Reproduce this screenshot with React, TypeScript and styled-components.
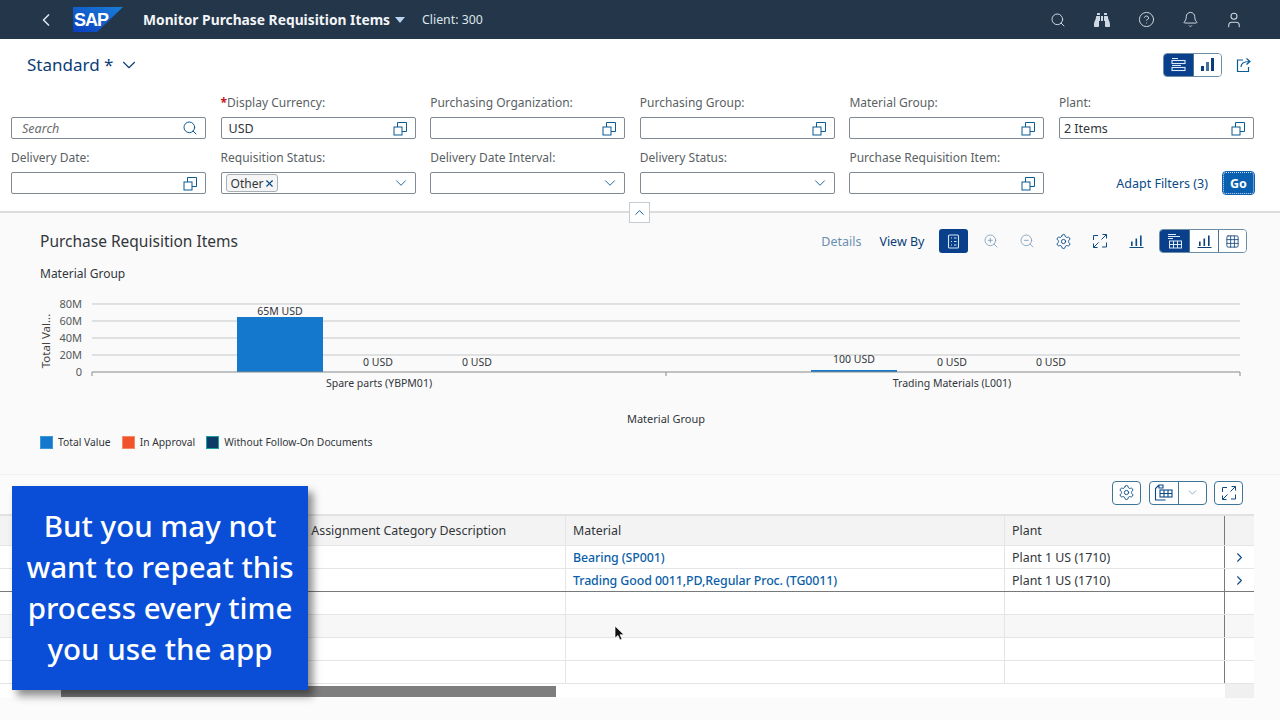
import styled, { createGlobalStyle } from "styled-components";
import {
  Bell,
  ChevronDown,
  ChevronLeft,
  ChevronRight,
  ChevronUp,
  CircleHelp,
  Grid3x3,
  Search,
  Settings,
  User,
  X,
  ZoomIn,
  ZoomOut,
} from "lucide-react";
import { FaBinoculars } from "react-icons/fa";

const GlobalStyle = createGlobalStyle`
  html, body {
    margin: 0;
    padding: 0;
    background: #fafafa;
    font-family: "Noto Sans", "Liberation Sans", sans-serif;
    color: #32363a;
  }
  * { box-sizing: border-box; }
`;

const Page = styled.div`
  position: relative;
  width: 1280px;
  height: 720px;
  overflow: hidden;
`;

/* shell bar */
const Shell = styled.header`
  display: flex;
  align-items: center;
  height: 39px;
  padding: 0 24px 0 36px;
  background: #23364a;
  color: #fff;
`;

const BackButton = styled.span`
  display: flex;
  width: 37px;
  color: #d8e2ec;
`;

const AppTitle = styled.span`
  margin-left: 20px;
  font-size: 13.8px;
  font-weight: 700;
  color: #f2f5f8;
`;

const TitleCaret = styled.span`
  width: 0;
  height: 0;
  margin: 1px 0 0 5px;
  border-left: 5px solid transparent;
  border-right: 5px solid transparent;
  border-top: 6px solid #b8d4ee;
`;

const Client = styled.span`
  margin-left: 17px;
  font-size: 12.3px;
  color: #dfe5eb;
`;

const ShellActions = styled.div`
  display: flex;
  align-items: center;
  margin-left: auto;
  color: #cfd9e3;
`;

const ShellIcon = styled.span`
  display: flex;
  justify-content: center;
  width: 44px;
`;

/* filter header */
const FilterHeader = styled.section`
  position: relative;
  height: 174px;
  background: #fff;
  border-bottom: 2px solid #dcdcdc;
`;

const VariantRow = styled.div`
  display: flex;
  align-items: center;
  height: 51px;
  padding: 0 28px 0 27px;
`;

const VariantName = styled.span`
  font-size: 17px;
  color: #0a3d77;
`;

const VariantCaret = styled.span`
  display: flex;
  margin-left: 5px;
  color: #0a3d77;
`;

const HeaderTools = styled.div`
  display: flex;
  align-items: center;
  gap: 14px;
  margin-left: auto;
  color: #0a5a94;
`;

const Segmented = styled.div<{ $inset?: boolean }>`
  display: flex;
  height: 24px;
  margin-left: ${(p) => (p.$inset ? 4 : 0)}px;
  border: 1px solid #6c8da8;
  border-radius: 4px;
  overflow: hidden;
`;

const Segment = styled.span<{ $active?: boolean; $width: number }>`
  display: flex;
  align-items: center;
  justify-content: center;
  width: ${(p) => p.$width}px;
  background: ${(p) => (p.$active ? "#0a3f8c" : "#fff")};
  color: ${(p) => (p.$active ? "#dcebf8" : "#0a3f78")};
  & + & {
    border-left: 1px solid #4b7595;
  }
`;

const FilterGrid = styled.div`
  display: grid;
  grid-template-columns: repeat(6, 195px);
  column-gap: 14.6px;
  row-gap: 0;
  padding: 3px 0 0 11px;
`;

const Field = styled.div`
  display: flex;
  flex-direction: column;
  height: 55px;
`;

const FieldLabel = styled.label`
  height: 24px;
  padding-top: 1px;
  font-size: 12px;
  line-height: 18px;
  color: #5a5f64;
`;

const Required = styled.span`
  color: #c4131f;
  font-weight: 700;
`;

const FieldInput = styled.div`
  display: flex;
  align-items: center;
  justify-content: space-between;
  height: 22px;
  padding: 0 7px;
  background: #fff;
  border: 1px solid #7f8a94;
  border-radius: 2px;
  font-size: 12.5px;
  color: #32363a;
`;

const FieldValue = styled.span<{ $tight?: boolean }>`
  margin-left: ${(p) => (p.$tight ? -3 : 0)}px;
`;

const Placeholder = styled.span`
  padding-left: 3px;
  font-style: italic;
  color: #6a6d70;
`;

const InputIcon = styled.span<{ $chevron?: boolean }>`
  display: flex;
  margin-right: ${(p) => (p.$chevron ? -2 : 0)}px;
  color: #0a5a94;
`;

const Token = styled.span`
  display: flex;
  align-items: center;
  gap: 1px;
  height: 18px;
  margin-left: -3px;
  padding: 0 2px 0 4px;
  background: #f5f5f5;
  border: 1px solid #a9b1b8;
  border-radius: 3px;
  font-size: 12px;
  color: #32363a;
  svg {
    color: #0a4a86;
  }
`;

const FilterActions = styled.div`
  display: flex;
  align-items: flex-end;
  justify-content: flex-end;
  gap: 15px;
  height: 46px;
`;

const AdaptLink = styled.span`
  padding-bottom: 2px;
  font-size: 12.5px;
  color: #0a4a86;
`;

const GoButton = styled.span`
  display: flex;
  align-items: center;
  justify-content: center;
  width: 31px;
  height: 22px;
  background: #0a5fb0;
  border: 1px dotted #cfe4f7;
  outline: 1px solid #0a5fb0;
  border-radius: 3px;
  font-size: 12.5px;
  font-weight: 700;
  color: #fff;
`;

const CollapseButton = styled.span`
  position: absolute;
  left: 629px;
  bottom: -12px;
  display: flex;
  align-items: center;
  justify-content: center;
  width: 21px;
  height: 21px;
  background: #fff;
  border: 1px solid #c4ccd3;
  color: #0a5a94;
`;

/* chart */
const ChartPanel = styled.section`
  height: 261px;
  padding: 12px 33px 0 40px;
  background: #fafafa;
`;

const ChartHeader = styled.div`
  display: flex;
  align-items: center;
  height: 32px;
`;

const PanelTitle = styled.h2`
  margin: 0;
  font-size: 15.5px;
  font-weight: 400;
  color: #32363a;
`;

const ChartTools = styled.div`
  display: flex;
  align-items: center;
  margin-left: auto;
  color: #0a5a94;
`;

const ToolText = styled.span<{ $muted?: boolean }>`
  margin-right: ${(p) => (p.$muted ? 18 : 14)}px;
  font-size: 12.5px;
  color: ${(p) => (p.$muted ? "#6b8fb0" : "#0a3d77")};
`;

const ToolIcon = styled.span<{ $muted?: boolean }>`
  display: flex;
  justify-content: center;
  width: 36.5px;
  color: ${(p) => (p.$muted ? "#7fa0bb" : "#0a4a86")};
`;

const ActiveTool = styled.span`
  display: flex;
  align-items: center;
  justify-content: center;
  width: 29px;
  height: 24px;
  margin-right: 5px;
  background: #0a3f8c;
  border-radius: 3px;
  color: #d5e5f4;
`;

const GroupLabel = styled.div`
  margin-top: 6px;
  height: 22px;
  font-size: 12px;
  line-height: 22px;
`;

const ChartArea = styled.svg`
  display: block;
  margin: 10px 0 0 -40px;
  font-family: "Noto Sans", "Liberation Sans", sans-serif;
  font-size: 10.5px;
  fill: #32363a;
`;

const Legend = styled.div`
  display: flex;
  align-items: center;
  height: 22px;
  margin-top: 3px;
  font-size: 10.3px;
  color: #32363a;
`;

const LegendItem = styled.span`
  display: flex;
  align-items: center;
  gap: 5px;
  margin-right: 11px;
`;

const Swatch = styled.span<{ $color: string; $edge: string }>`
  width: 13px;
  height: 13px;
  background: ${(p) => p.$color};
  border: 1px solid ${(p) => p.$edge};
`;

/* table */
const TablePanel = styled.section`
  height: 246px;
  padding-top: 1px;
  background: #fbfbfb;
  border-top: 1px solid #f2f2f2;
`;

const TableToolbar = styled.div`
  display: flex;
  align-items: center;
  justify-content: flex-end;
  gap: 7.5px;
  height: 38px;
  padding: 0 37px 5px 0;
  color: #0a4a86;
`;

const ToolButton = styled.span`
  display: flex;
  align-items: center;
  height: 24px;
  background: #fff;
  border: 1px solid #3f7596;
  border-radius: 4px;
`;

const ToolCell = styled.span<{ $width: number }>`
  display: flex;
  align-items: center;
  justify-content: center;
  width: ${(p) => p.$width}px;
  height: 100%;
  & + & {
    border-left: 1px solid #3f7596;
  }
`;

const Table = styled.div`
  width: 1254px;
  border-top: 2px solid #e2e2e2;
`;

const Row = styled.div<{ $kind?: "head" | "shade" | "last" }>`
  display: grid;
  grid-template-columns: 254px 312px 439px 220px 29px;
  height: ${(p) => (p.$kind === "head" ? 30 : 23)}px;
  background: ${(p) =>
    p.$kind === "head" ? "#f3f3f3" : p.$kind === "shade" ? "#f7f7f7" : "#fff"};
  border-bottom: 1px solid ${(p) => (p.$kind === "last" ? "#77797b" : "#e5e5e5")};
`;

const Cell = styled.div<{ $link?: boolean; $nav?: boolean }>`
  display: flex;
  align-items: center;
  justify-content: ${(p) => (p.$nav ? "center" : "flex-start")};
  padding: 0 ${(p) => (p.$nav ? 0 : 7)}px;
  font-size: 12.4px;
  font-weight: ${(p) => (p.$link ? 500 : 400)};
  letter-spacing: ${(p) => (p.$link ? "-0.1px" : "normal")};
  white-space: nowrap;
  overflow: hidden;
  color: ${(p) => (p.$link ? "#0b5fa8" : "#32363a")};
  border-right: 1px solid #e5e5e5;
  &:nth-child(4) {
    border-right-color: #77797b;
  }
  &:last-child {
    border-right: 0;
    color: #0a4a86;
  }
`;

const ScrollTrack = styled.div`
  display: flex;
  width: 1254px;
  height: 14px;
  padding-left: 61px;
  background: #fff;
`;

const ScrollThumb = styled.div`
  width: 495px;
  height: 11px;
  margin-top: 2px;
  background: #7e7e7e;
`;

const ScrollCorner = styled.div`
  width: 29px;
  margin-left: auto;
  background: #f0f0f0;
`;

/* things lying over the page */
const Callout = styled.aside`
  position: absolute;
  left: 12px;
  top: 486px;
  display: flex;
  align-items: center;
  justify-content: center;
  width: 296px;
  height: 204px;
  padding-bottom: 2px;
  background: #0a4ed8;
  box-shadow: 5px 6px 8px rgba(0, 0, 0, 0.45);
  font-size: 29.5px;
  font-weight: 500;
  line-height: 41px;
  text-align: center;
  color: #fff;
`;

const Pointer = styled.svg`
  position: absolute;
  left: 614px;
  top: 625px;
`;

function ValueHelp() {
  return (
    <svg width="15" height="15" viewBox="0 0 15 15" fill="none" stroke="currentColor" strokeWidth="1">
      <rect x="1" y="6" width="8" height="8" />
      <path d="M4.500 6V1.500h9v9H9" />
    </svg>
  );
}

function ShareIcon() {
  return (
    <svg width="16" height="16" viewBox="0 0 16 16" fill="none" stroke="currentColor" strokeWidth="1.2">
      <path d="M7 3H1.500v11.500h11V10" />
      <path d="M5 10c0-4 3-5.500 8.500-5.500M10.500 1.500l3.500 3-3.500 3" />
    </svg>
  );
}

function BarsIcon({ size = 15 }: { size?: number }) {
  return (
    <svg width={size} height={size} viewBox="0 0 15 15" fill="currentColor">
      <rect x="1" y="9" width="3" height="5" />
      <rect x="6" y="5" width="3" height="9" fillOpacity="0.75" />
      <rect x="11" y="1" width="3" height="13" />
    </svg>
  );
}

function AxisBarsIcon() {
  return (
    <svg width="15" height="15" viewBox="0 0 15 15" fill="currentColor">
      <rect x="2" y="7.500" width="1.600" height="4.500" />
      <rect x="6.500" y="4.500" width="1.600" height="7.500" />
      <rect x="11" y="1.500" width="1.600" height="10.500" />
      <rect x="0.500" y="13" width="14" height="1" />
    </svg>
  );
}

function ListBarsIcon() {
  return (
    <svg width="15" height="15" viewBox="0 0 15 15" fill="none" stroke="currentColor" strokeWidth="1.1">
      <path d="M1 1.500h6" />
      <rect x="1" y="3.500" width="13" height="3" />
      <path d="M1 8.500h9" />
      <rect x="1" y="10.500" width="13" height="3" />
    </svg>
  );
}

function DetailsIcon() {
  return (
    <svg width="15" height="15" viewBox="0 0 15 15" fill="none" stroke="currentColor" strokeWidth="1.1">
      <rect x="2.500" y="1" width="10" height="13" rx="1" />
      <path d="M5 4h1M5 7.500h1M5 11h1M8 4h2.500M8 7.500h2.500M8 11h2.500" />
    </svg>
  );
}

function ExpandIcon() {
  return (
    <svg width="16" height="16" viewBox="0 0 16 16" fill="none" stroke="currentColor" strokeWidth="1">
      <path d="M1.500 7V2.500H6M10 14h4.500V9.500M9.500 6.500l5-5M10.500 1.500h4v4M6.500 9.500l-5 5M1.500 10.500v4h4" />
    </svg>
  );
}

function ChartTableIcon() {
  return (
    <svg width="16" height="16" viewBox="0 0 16 16" fill="none" stroke="currentColor" strokeWidth="1">
      <path d="M1 1.500h8M1 3.500h12M1 5.500h5" strokeWidth="1.200" />
      <rect x="2.500" y="8" width="12" height="7" />
      <path d="M2.500 11.500h12M6.500 8v7M10.500 8v7" />
    </svg>
  );
}

function ExportIcon() {
  return (
    <svg width="20" height="18" viewBox="0 0 20 18" fill="none" stroke="currentColor" strokeWidth="1.1">
      <path d="M5 1h4v3H5zM5 1 1.500 4.500V16h10" />
      <rect x="6" y="6" width="12" height="7" />
      <path d="M6 9.500h12M10 6v7M14 6v7" />
    </svg>
  );
}

function SapLogo() {
  return (
    <svg width="50" height="26" viewBox="0 0 50 26">
      <defs>
        <linearGradient id="sapBlue" x1="0" y1="1" x2="1" y2="0">
          <stop offset="0" stopColor="#0a3fc0" />
          <stop offset="1" stopColor="#1a7fd8" />
        </linearGradient>
      </defs>
      <polygon points="0,0 50,0 24,25 0,25" fill="url(#sapBlue)" />
      <text x="1" y="19" fontFamily="Liberation Sans, sans-serif" fontWeight="700" fontSize="18" letterSpacing="-1" fill="#fff">
        SAP
      </text>
    </svg>
  );
}

const gridLines = [
  { y: 9, label: "80M" },
  { y: 26, label: "60M" },
  { y: 43, label: "40M" },
  { y: 60, label: "20M" },
];

const barLabels = [
  { x: 280, y: 20, text: "65M USD" },
  { x: 378, y: 71, text: "0 USD" },
  { x: 477, y: 71, text: "0 USD" },
  { x: 854, y: 68, text: "100 USD" },
  { x: 952, y: 71, text: "0 USD" },
  { x: 1051, y: 71, text: "0 USD" },
];

function RequisitionChart() {
  return (
    <ChartArea width="1280" height="133" viewBox="0 0 1280 133">
      {gridLines.map((g) => (
        <g key={g.y}>
          <line x1="92" x2="1240" y1={g.y} y2={g.y} stroke="#c4c7ca" />
          <text x="82" y={g.y + 4} textAnchor="end" fill="#55595d" fontSize="11">
            {g.label}
          </text>
        </g>
      ))}
      <text x="82" y="81" textAnchor="end" fill="#55595d" fontSize="11">
        0
      </text>
      <text transform="translate(50 46) rotate(-90)" textAnchor="middle" fill="#444" fontSize="11.5">
        Total Val...
      </text>
      <rect x="237" y="22" width="86" height="55" fill="#1479cc" />
      <rect x="811" y="75" width="86" height="2" fill="#1479cc" />
      <path d="M92 81V77H1240V81M666 77v4" fill="none" stroke="#85898d" />
      {barLabels.map((b) => (
        <text key={b.x} x={b.x} y={b.y} textAnchor="middle">
          {b.text}
        </text>
      ))}
      <text x="379" y="92" textAnchor="middle">
        Spare parts (YBPM01)
      </text>
      <text x="952" y="92" textAnchor="middle">
        Trading Materials (L001)
      </text>
      <text x="666" y="128" textAnchor="middle" fontSize="11">
        Material Group
      </text>
    </ChartArea>
  );
}

const rows = [
  { material: "Bearing (SP001)", plant: "Plant 1 US (1710)" },
  { material: "Trading Good 0011,PD,Regular Proc. (TG0011)", plant: "Plant 1 US (1710)" },
];

function FilterInput({ label, value, tight }: { label: string; value?: string; tight?: boolean }) {
  return (
    <Field>
      <FieldLabel>{label}</FieldLabel>
      <FieldInput>
        <FieldValue $tight={tight}>{value}</FieldValue>
        <InputIcon>
          <ValueHelp />
        </InputIcon>
      </FieldInput>
    </Field>
  );
}

function FilterSelect({ label }: { label: string }) {
  return (
    <Field>
      <FieldLabel>{label}</FieldLabel>
      <FieldInput>
        <span />
        <InputIcon $chevron>
          <ChevronDown size={18} strokeWidth={1.2} />
        </InputIcon>
      </FieldInput>
    </Field>
  );
}

function EmptyRow({ shade }: { shade?: boolean }) {
  return (
    <Row $kind={shade ? "shade" : undefined}>
      <Cell />
      <Cell />
      <Cell />
      <Cell />
      <Cell $nav />
    </Row>
  );
}

export default function App() {
  return (
    <Page>
      <GlobalStyle />
      <Shell>
        <BackButton>
          <ChevronLeft size={20} strokeWidth={2} />
        </BackButton>
        <SapLogo />
        <AppTitle>Monitor Purchase Requisition Items</AppTitle>
        <TitleCaret />
        <Client>Client: 300</Client>
        <ShellActions>
          <ShellIcon>
            <Search size={16} strokeWidth={1.5} />
          </ShellIcon>
          <ShellIcon>
            <FaBinoculars size={16} />
          </ShellIcon>
          <ShellIcon>
            <CircleHelp size={17} strokeWidth={1.4} />
          </ShellIcon>
          <ShellIcon>
            <Bell size={17} strokeWidth={1.4} />
          </ShellIcon>
          <ShellIcon>
            <User size={18} strokeWidth={1.4} />
          </ShellIcon>
        </ShellActions>
      </Shell>

      <FilterHeader>
        <VariantRow>
          <VariantName>Standard *</VariantName>
          <VariantCaret>
            <ChevronDown size={22} strokeWidth={1.2} />
          </VariantCaret>
          <HeaderTools>
            <Segmented>
              <Segment $active $width={29}>
                <ListBarsIcon />
              </Segment>
              <Segment $width={28}>
                <BarsIcon />
              </Segment>
            </Segmented>
            <ShareIcon />
          </HeaderTools>
        </VariantRow>
        <FilterGrid>
          <Field>
            <FieldLabel />
            <FieldInput>
              <Placeholder>Search</Placeholder>
              <InputIcon>
                <Search size={16} strokeWidth={1.5} />
              </InputIcon>
            </FieldInput>
          </Field>
          <Field>
            <FieldLabel>
              <Required>*</Required>Display Currency:
            </FieldLabel>
            <FieldInput>
              <FieldValue>USD</FieldValue>
              <InputIcon>
                <ValueHelp />
              </InputIcon>
            </FieldInput>
          </Field>
          <FilterInput label="Purchasing Organization:" />
          <FilterInput label="Purchasing Group:" />
          <FilterInput label="Material Group:" />
          <FilterInput label="Plant:" value="2 Items" tight />
          <FilterInput label="Delivery Date:" />
          <Field>
            <FieldLabel>Requisition Status:</FieldLabel>
            <FieldInput>
              <Token>
                Other
                <X size={11} strokeWidth={2.5} />
              </Token>
              <InputIcon $chevron>
                <ChevronDown size={18} strokeWidth={1.2} />
              </InputIcon>
            </FieldInput>
          </Field>
          <FilterSelect label="Delivery Date Interval:" />
          <FilterSelect label="Delivery Status:" />
          <FilterInput label="Purchase Requisition Item:" />
          <FilterActions>
            <AdaptLink>Adapt Filters (3)</AdaptLink>
            <GoButton>Go</GoButton>
          </FilterActions>
        </FilterGrid>
        <CollapseButton>
          <ChevronUp size={15} strokeWidth={1.5} />
        </CollapseButton>
      </FilterHeader>

      <ChartPanel>
        <ChartHeader>
          <PanelTitle>Purchase Requisition Items</PanelTitle>
          <ChartTools>
            <ToolText $muted>Details</ToolText>
            <ToolText>View By</ToolText>
            <ActiveTool>
              <DetailsIcon />
            </ActiveTool>
            <ToolIcon $muted>
              <ZoomIn size={16} strokeWidth={1.3} />
            </ToolIcon>
            <ToolIcon $muted>
              <ZoomOut size={16} strokeWidth={1.3} />
            </ToolIcon>
            <ToolIcon>
              <Settings size={17} strokeWidth={1.3} />
            </ToolIcon>
            <ToolIcon>
              <ExpandIcon />
            </ToolIcon>
            <ToolIcon>
              <AxisBarsIcon />
            </ToolIcon>
            <Segmented $inset>
              <Segment $active $width={29}>
                <ChartTableIcon />
              </Segment>
              <Segment $width={29}>
                <AxisBarsIcon />
              </Segment>
              <Segment $width={28}>
                <Grid3x3 size={15} strokeWidth={1.3} />
              </Segment>
            </Segmented>
          </ChartTools>
        </ChartHeader>
        <GroupLabel>Material Group</GroupLabel>
        <RequisitionChart />
        <Legend>
          <LegendItem>
            <Swatch $color="#1479cc" $edge="#3a97dc" />
            Total Value
          </LegendItem>
          <LegendItem>
            <Swatch $color="#f0532a" $edge="#f78a66" />
            In Approval
          </LegendItem>
          <LegendItem>
            <Swatch $color="#0c3c66" $edge="#1aa0a0" />
            Without Follow-On Documents
          </LegendItem>
        </Legend>
      </ChartPanel>

      <TablePanel>
        <TableToolbar>
          <ToolButton>
            <ToolCell $width={27}>
              <Settings size={17} strokeWidth={1.3} />
            </ToolCell>
          </ToolButton>
          <ToolButton>
            <ToolCell $width={28}>
              <ExportIcon />
            </ToolCell>
            <ToolCell $width={28}>
              <ChevronDown size={13} strokeWidth={1.3} color="#6a8aa3" />
            </ToolCell>
          </ToolButton>
          <ToolButton>
            <ToolCell $width={27}>
              <ExpandIcon />
            </ToolCell>
          </ToolButton>
        </TableToolbar>
        <Table>
          <Row $kind="head">
            <Cell />
            <Cell>Account Assignment Category Description</Cell>
            <Cell>Material</Cell>
            <Cell>Plant</Cell>
            <Cell $nav />
          </Row>
          {rows.map((r, i) => (
            <Row key={r.material} $kind={i === rows.length - 1 ? "last" : undefined}>
              <Cell />
              <Cell />
              <Cell $link>{r.material}</Cell>
              <Cell>{r.plant}</Cell>
              <Cell $nav>
                <ChevronRight size={15} strokeWidth={1.7} />
              </Cell>
            </Row>
          ))}
          <EmptyRow />
          <EmptyRow shade />
          <EmptyRow />
          <EmptyRow />
        </Table>
        <ScrollTrack>
          <ScrollThumb />
          <ScrollCorner />
        </ScrollTrack>
      </TablePanel>

      <Callout>
        But you may not
        <br />
        want to repeat this
        <br />
        process every time
        <br />
        you use the app
      </Callout>
      <Pointer width="12" height="17" viewBox="0 0 12 17">
        <path d="M1 1v12l3-2.500 2 4.500 2-1-2-4.200h4z" fill="#111" stroke="#fff" strokeWidth="0.7" />
      </Pointer>
    </Page>
  );
}
